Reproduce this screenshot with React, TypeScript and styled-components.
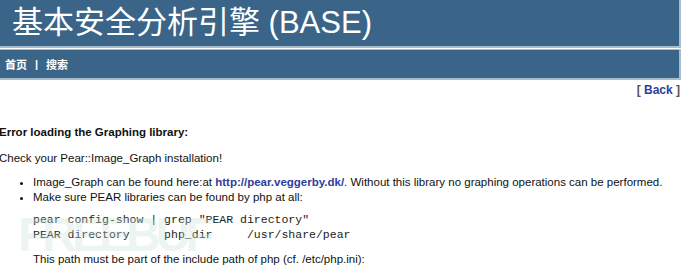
import React from "react";
import styled, { createGlobalStyle } from "styled-components";

const Global = createGlobalStyle`
  html, body { margin: 0; padding: 0; background: #fff; }
  body { font-family: "Liberation Sans", Arial, sans-serif; color: #111; overflow: hidden; }
`;

const Page = styled.div`
  position: relative;
  width: 690px;
  height: 265px;
  overflow: hidden;
`;

const Header = styled.div`
  width: 681px;
`;

const TitleBar = styled.div`
  width: 681px;
  height: 48px;
  box-sizing: border-box;
  background: #3a6588;
  border-right: 2px solid #a7bdcd;
  border-bottom: 2px solid #a7bdcd;
  display: flex;
  align-items: center;
  padding-left: 12px;
`;

const Title = styled.h1`
  margin: -2px 0 0 0;
  font-family: "Liberation Sans", "Noto Sans CJK SC", sans-serif;
  font-weight: normal;
  font-size: 31px;
  color: #fff;
  line-height: 1;
`;

const NavBar = styled.div`
  margin-top: 1px;
  width: 681px;
  height: 31px;
  box-sizing: border-box;
  background: #3a6588;
  border-top: 1px solid #a7bdcd;
  border-right: 2px solid #a7bdcd;
  border-bottom: 2px solid #a7bdcd;
  display: flex;
  align-items: center;
  padding-left: 5px;
  gap: 8px;
`;

const NavItem = styled.span`
  font-family: "Liberation Sans", "Noto Sans CJK SC", sans-serif;
  font-weight: bold;
  font-size: 11px;
  color: #fff;
`;

const BackRow = styled.div`
  display: flex;
  justify-content: flex-end;
  width: 680px;
  margin-top: 3px;
  font-size: 12px;
  font-weight: bold;
  color: #555;
`;

const Link = styled.a`
  color: #2d3e9e;
  text-decoration: none;
  font-weight: bold;
`;

const Content = styled.div`
  margin-left: -1px;
  font-size: 11.5px;
  line-height: 15px;
`;

const ErrorTitle = styled.p`
  margin: 28px 0 0 0;
  font-weight: bold;
`;

const Para = styled.p`
  margin: 11px 0 0 0;
`;

const List = styled.ul`
  margin: 9px 0 0 0;
  padding-left: 34px;
  li { margin: 0; }
`;

const Pre = styled.pre`
  margin: 7px 0 0 34px;
  font-family: "Liberation Mono", "Courier New", monospace;
  font-size: 11.5px;
  line-height: 15px;
  color: #222;
`;

const Note = styled.p`
  margin: 10px 0 0 34px;
`;

const Watermark = styled.div`
  position: absolute;
  left: 18px;
  top: 211px;
  font-family: "Liberation Sans", sans-serif;
  font-weight: bold;
  font-size: 48px;
  letter-spacing: -5px;
  color: rgba(200, 228, 215, 0.35);
  pointer-events: none;
  line-height: 1;
  white-space: nowrap;
`;

export default function App() {
  return (
    <Page>
      <Global />
      <Header>
        <TitleBar>
          <Title>基本安全分析引擎 (BASE)</Title>
        </TitleBar>
        <NavBar>
          <NavItem>首页</NavItem>
          <NavItem>|</NavItem>
          <NavItem>搜索</NavItem>
        </NavBar>
      </Header>
      <BackRow>
        [&nbsp;<Link href="#">Back</Link>&nbsp;]
      </BackRow>
      <Content>
        <ErrorTitle>Error loading the Graphing library:</ErrorTitle>
        <Para>Check your Pear::Image_Graph installation!</Para>
        <List>
          <li>
            Image_Graph can be found here:at{" "}
            <Link href="#">http://pear.veggerby.dk/</Link>. Without this library no graphing operations can be performed.
          </li>
          <li>Make sure PEAR libraries can be found by php at all:</li>
        </List>
        <Pre>{`pear config-show | grep "PEAR directory"
PEAR directory     php_dir     /usr/share/pear`}</Pre>
        <Note>This path must be part of the include path of php (cf. /etc/php.ini):</Note>
      </Content>
      <Watermark>FREEBUF</Watermark>
    </Page>
  );
}
